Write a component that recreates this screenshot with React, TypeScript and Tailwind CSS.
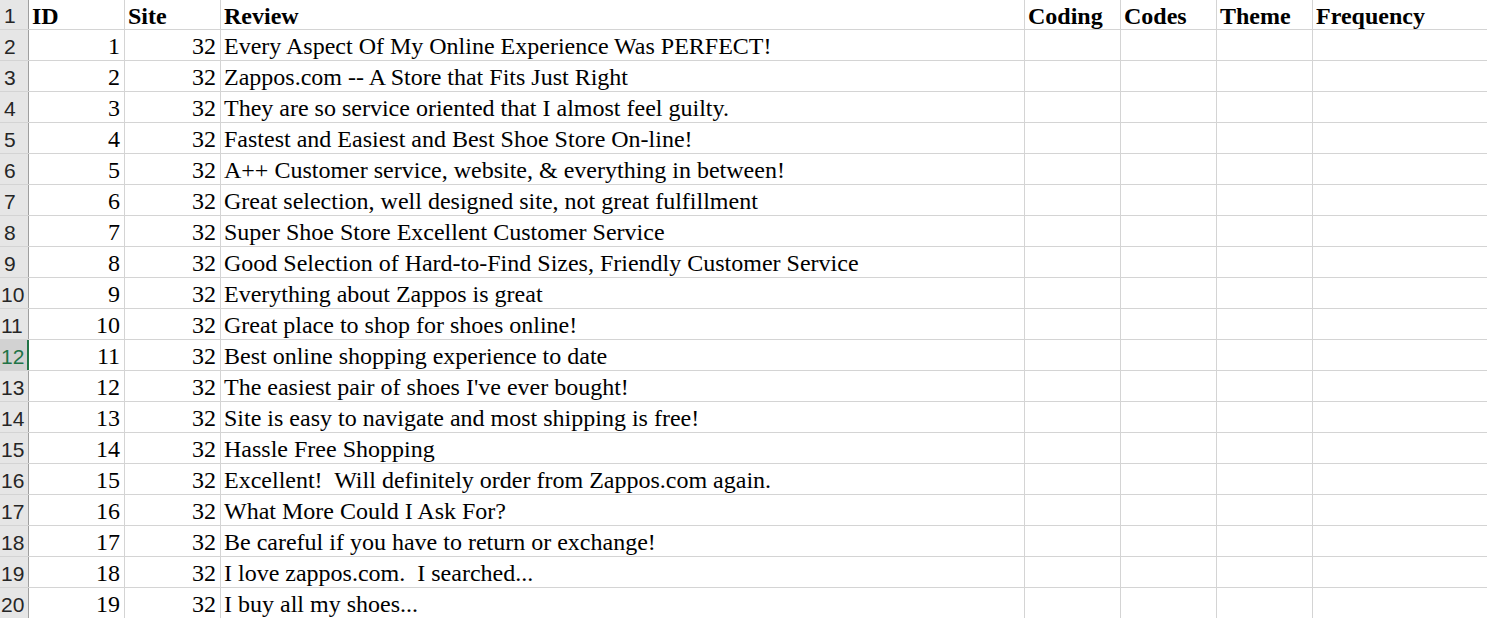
const reviews = [
  'Every Aspect Of My Online Experience Was PERFECT!',
  'Zappos.com -- A Store that Fits Just Right',
  'They are so service oriented that I almost feel guilty.',
  'Fastest and Easiest and Best Shoe Store On-line!',
  'A++ Customer service, website, & everything in between!',
  'Great selection, well designed site, not great fulfillment',
  'Super Shoe Store Excellent Customer Service',
  'Good Selection of Hard-to-Find Sizes, Friendly Customer Service',
  'Everything about Zappos is great',
  'Great place to shop for shoes online!',
  'Best online shopping experience to date',
  "The easiest pair of shoes I've ever bought!",
  'Site is easy to navigate and most shipping is free!',
  'Hassle Free Shopping',
  'Excellent!  Will definitely order from Zappos.com again.',
  'What More Could I Ask For?',
  'Be careful if you have to return or exchange!',
  'I love zappos.com.  I searched...',
  'I buy all my shoes...',
]

const serif = { fontFamily: '"Liberation Serif", "Times New Roman", serif' }

const RowHeader = ({ n, selected }: { n: number; selected?: boolean }) => (
  <div
    className={
      selected
        ? 'w-[29px] shrink-0 bg-[#d2d2d2] border-r-2 border-[#217346] text-[#217346] flex items-end pl-[1px] text-[21px] leading-none'
        : 'w-[29px] shrink-0 bg-[#e6e6e6] border-r border-[#9f9f9f] text-[#262626] flex items-end pl-[1px] text-[21px] leading-none'
    }
    style={{ fontFamily: '"Liberation Sans", Arial, sans-serif' }}
  >
    <span className={n < 10 ? 'pl-[3px] pb-[3px]' : 'pb-[3px]'}>{n}</span>
  </div>
)

export default function App() {
  return (
    <div className="w-[1487px] h-[618px] overflow-hidden bg-white text-black">
      {/* header row */}
      <div className="flex h-[30px] border-b border-[#d4d4d4]">
        <RowHeader n={1} />
        {['ID', 'Site', 'Review', 'Coding', 'Codes', 'Theme'].map((h) => (
          <div
            key={h}
            className={`${h === 'Review' ? 'w-[804px]' : 'w-[96px]'} shrink-0 border-r border-[#d4d4d4] pl-[3px] flex items-end text-[24px] font-bold leading-none`}
            style={serif}
          >
            <span className="pb-[1px]">{h}</span>
          </div>
        ))}
        <div className="flex-1 pl-[3px] flex items-end text-[24px] font-bold leading-none" style={serif}>
          <span className="pb-[1px]">Frequency</span>
        </div>
      </div>

      {reviews.map((r, i) => (
        <div key={i} className="flex h-[31px] border-b border-[#d4d4d4]">
          <RowHeader n={i + 2} selected={i + 2 === 12} />
          <div className="w-[96px] shrink-0 border-r border-[#d4d4d4] pr-[4px] flex items-end justify-end text-[24px] leading-none" style={serif}>
            <span className="pb-[2px]">{i + 1}</span>
          </div>
          <div className="w-[96px] shrink-0 border-r border-[#d4d4d4] pr-[4px] flex items-end justify-end text-[24px] leading-none" style={serif}>
            <span className="pb-[2px]">32</span>
          </div>
          <div className="w-[804px] shrink-0 border-r border-[#d4d4d4] pl-[3px] flex items-end text-[24px] leading-none whitespace-pre" style={serif}>
            <span className="pb-[2px]">{r}</span>
          </div>
          <div className="w-[96px] shrink-0 border-r border-[#d4d4d4]" />
          <div className="w-[96px] shrink-0 border-r border-[#d4d4d4]" />
          <div className="w-[96px] shrink-0 border-r border-[#d4d4d4]" />
          <div className="flex-1" />
        </div>
      ))}
    </div>
  )
}
